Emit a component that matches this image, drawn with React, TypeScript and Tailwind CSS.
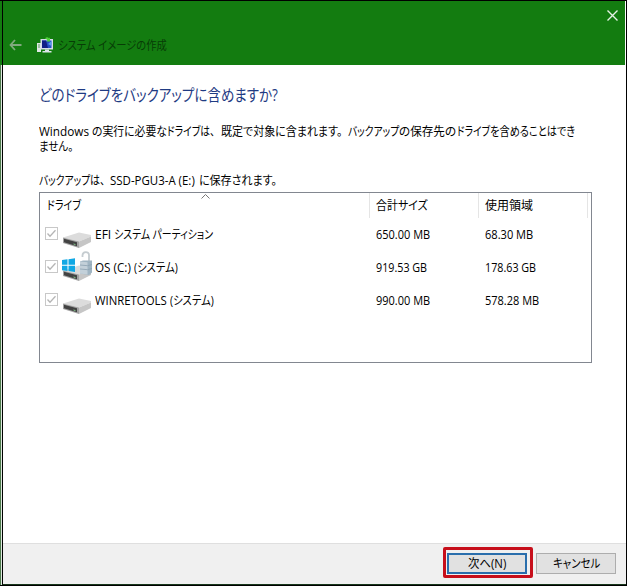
import { useLayoutEffect, useRef, useState, type ReactNode } from "react";

const drives = [
  {
    latin: "EFI",
    latinClass: "w-[16px]",
    name: "システム パーティション",
    nameClass: "w-[99px]",
    total: "650.00 MB",
    totalClass: "w-[54px]",
    used: "68.30 MB",
    usedClass: "w-[48px]",
    system: false,
  },
  {
    latin: "OS (C:)",
    latinClass: "w-[36px]",
    name: "(システム)",
    nameClass: "w-[44px]",
    total: "919.53 GB",
    totalClass: "w-[51px]",
    used: "178.63 GB",
    usedClass: "w-[51px]",
    system: true,
  },
  {
    latin: "WINRETOOLS",
    latinClass: "w-[72px]",
    name: "(システム)",
    nameClass: "w-[44px]",
    total: "990.00 MB",
    totalClass: "w-[54px]",
    used: "578.28 MB",
    usedClass: "w-[54px]",
    system: false,
  },
];

// Condenses its text to the width given by className
const Fit = ({ className, children }: { className: string; children: ReactNode }) => {
  const outer = useRef<HTMLSpanElement>(null);
  const inner = useRef<HTMLSpanElement>(null);
  const [scale, setScale] = useState(1);

  useLayoutEffect(() => {
    if (outer.current && inner.current) {
      setScale(outer.current.offsetWidth / inner.current.offsetWidth);
    }
  }, []);

  return (
    <span ref={outer} className={`inline-block whitespace-nowrap ${className}`}>
      <span ref={inner} className="inline-block origin-left" style={{ transform: `scaleX(${scale})` }}>
        {children}
      </span>
    </span>
  );
};

const BackArrow = () => (
  <svg width="13" height="12" viewBox="0 0 13 12" fill="none" stroke="#81a97e" strokeWidth="1.8">
    <path d="M12.500 6H1.500M6 1L1.500 6 6 11" />
  </svg>
);

const BackupIcon = () => (
  <svg width="18" height="17" viewBox="0 0 18 17">
    <path d="M0 6h4v9H0z" fill="#dfe8e4" />
    <path d="M1 8h2M1 10h2" stroke="#5b9a60" />
    <path d="M3.500 2H16v10.500H3.500z" fill="#d5dde8" />
    <path d="M5 3.500h9.500V11H5z" fill="#2450c4" />
    <path d="M5 3.500h4L11 11H5z" fill="#101f86" />
    <path d="M11 7l3.500-3v5z" fill="#5c9bea" />
    <path d="M8 12.500h4v1.500h2.500v1.500H5.500V14H8z" fill="#dde5ea" />
    <path d="M8 1.500c1-1.500 3-1.500 4-.3l1-.7v4H9.500l1-1.200c-.5-1-1.500-1.500-2.500-1.800z" fill="#4ed038" />
  </svg>
);

const DriveIcon = ({ system }: { system: boolean }) => (
  <svg width="32" height="32" viewBox="0 0 32 32">
    <path d="M1 20.500L17 15.500l12 2.500v1.500l-12 5z" fill="#dcdcdc" />
    <path d="M1 20.500l16 4V31L1 26z" fill="#a2a2a2" />
    <path d="M17 24.500l12-5v5.500l-12 6z" fill="#c6c6c6" />
    <path d="M2 21.800l13 3.400v4L2 25.200z" fill="#424242" />
    <path d="M11.500 27l2 .6" stroke="#85c78b" />
    {system && (
      <>
        <path d="M0 10l5.500-.7v5.400H0zM6.500 9.200L13 8.300v6.400H6.500zM0 15.700h5.500v5.300L0 20.200zM6.500 15.700H13v6.200l-6.500-.8z" fill="#12a8e4" />
        <path d="M20.500 7V5.500c0-4.500 6.500-4.500 6.500-.5v7" fill="none" stroke="#c5ccd0" strokeWidth="1.800" />
        <path d="M18 11.500l3-1h9v12l-3 2.500-9-1.500z" fill="#9fb4c2" />
        <path d="M18 11.500l7.500.8V24.500l-7.500-1z" fill="#c3d0d9" />
        <path d="M18 15l7.500.7 4.500-1.200M18 19l7.500.7 4.500-1.200" fill="none" stroke="#8ba1b0" strokeWidth=".8" />
      </>
    )}
  </svg>
);

const CheckBox = () => (
  <div className="mb-[3px] flex size-[13px] items-center justify-center border border-[#c8c8c8] bg-white">
    <svg width="11" height="11" viewBox="0 0 11 11" fill="none" stroke="#b5b5b5" strokeWidth="1.3">
      <path d="M1.500 5.500l2.500 2.800 5.500-6" />
    </svg>
  </div>
);

export default function App() {
  return (
    <div className="flex h-[586px] w-[627px] overflow-hidden border-t border-r border-b border-black bg-white font-['Open_Sans','Noto_Sans_CJK_JP',sans-serif] text-[12px] text-black [font-feature-settings:'palt']">
      <div className="flex w-[2px] shrink-0 flex-col">
        <div className="h-16 bg-[#137c10]" />
        <div className="grow border-l border-[#4b784b] bg-[#dfe9df]" />
      </div>
      <div className="flex w-[624px] shrink-0 flex-col border-b border-l border-b-[#17371a] border-l-black">
        <header className="mr-px flex h-16 shrink-0 flex-col bg-[#137c10]">
          <div className="flex h-[29px] items-center justify-end pr-[7px]">
            <svg width="11" height="11" viewBox="0 0 11 11" stroke="#e6f2e6" strokeWidth="1.4">
              <path d="M.5.5l10 10M10.500.5l-10 10" />
            </svg>
          </div>
          <div className="mt-[3px] flex h-6 items-center pl-[6px]">
            <BackArrow />
            <div className="ml-[15px]">
              <BackupIcon />
            </div>
            <h1 className="mt-[2px] ml-[3px] h-[18px] leading-[18px] text-[#073d06]">
              <Fit className="w-[109px]">システム イメージの作成</Fit>
            </h1>
          </div>
        </header>

        <main className="flex grow flex-col pl-9">
          <h2 className="mt-[18px] h-6 text-[16px] leading-6 text-[#1f3b83]">
            <Fit className="w-[239px]">どのドライブをバックアップに含めますか?</Fit>
          </h2>
          <div className="mt-[17px] flex h-[15px] leading-[15px]">
            <Fit className="w-[50px]">Windows</Fit>
            <Fit className="ml-[3px] w-[75px]">の実行に必要な</Fit>
            <Fit className="w-[48px]">ドライブは、</Fit>
            <Fit className="ml-[6px] w-[121px]">既定で対象に含まれます。</Fit>
            <Fit className="ml-[6px] w-[51px]">バックアップ</Fit>
            <Fit className="w-[57px]">の保存先の</Fit>
            <Fit className="ml-px w-[33px]">ドライブ</Fit>
            <Fit className="w-[85px]">を含めることはでき</Fit>
          </div>
          <p className="h-[15px] leading-[15px]">
            <Fit className="w-[34px]">ません。</Fit>
          </p>
          <div className="mt-[19px] flex h-[15px] leading-[15px]">
            <Fit className="w-[51px]">バックアップ</Fit>
            <Fit className="w-[15px]">は、</Fit>
            <Fit className="ml-[5px] w-[85px]">SSD-PGU3-A (E:)</Fit>
            <Fit className="ml-[4px] w-[78px]">に保存されます。</Fit>
          </div>

          <div className="mt-1 h-[171px] w-[553px] border border-[#828790]">
            <div className="relative flex h-[25px] leading-[26px]">
              <div className="w-[330px] border-r border-[#e5e5e5] pl-[7px]">
                <Fit className="w-[34px]">ドライブ</Fit>
              </div>
              <div className="w-[109px] border-r border-[#e5e5e5] pl-[6px]">
                <Fit className="w-[52px]">合計サイズ</Fit>
              </div>
              <div className="w-[109px] border-r border-[#e5e5e5] pl-[6px]">
                <Fit className="w-[48px]">使用領域</Fit>
              </div>
              <svg className="absolute top-[1px] left-[161px]" width="9" height="5" viewBox="0 0 9 5" fill="none" stroke="#777">
                <path d="M.5 4.500l4-4 4 4" />
              </svg>
            </div>
            {drives.map((drive) => (
              <div key={drive.latin} className="flex h-[33px] items-center">
                <div className="flex w-[330px] items-center pl-[5px]">
                  <CheckBox />
                  <div className="mr-px mb-[4px] ml-[4px] h-8">
                    <DriveIcon system={drive.system} />
                  </div>
                  <Fit className={drive.latinClass}>{drive.latin}</Fit>
                  <Fit className={`ml-[3px] ${drive.nameClass}`}>{drive.name}</Fit>
                </div>
                <div className="w-[109px] pl-[6px]">
                  <Fit className={drive.totalClass}>{drive.total}</Fit>
                </div>
                <div className="pl-[6px]">
                  <Fit className={drive.usedClass}>{drive.used}</Fit>
                </div>
              </div>
            ))}
          </div>
        </main>

        <footer className="flex h-[41px] shrink-0 items-start justify-end gap-[3px] border-t border-[#dfdfdf] bg-[#f0f0f0] pr-[10px]">
          <div className="mt-[3px] rounded-[2px] border-3 border-[#c70f1b] pt-[3px] pr-[3px] pb-px pl-px">
            <button className="block h-[21px] w-[80px] border-2 border-[#2a6eac] bg-[#e1e1e1] leading-[16px]">
              <Fit className="w-[38px]">次へ(N)</Fit>
            </button>
          </div>
          <button className="mt-[9px] h-[21px] w-[80px] border border-[#adadad] bg-[#e1e1e1] leading-[18px]">
            <Fit className="w-[47px]">キャンセル</Fit>
          </button>
        </footer>
      </div>
    </div>
  );
}
